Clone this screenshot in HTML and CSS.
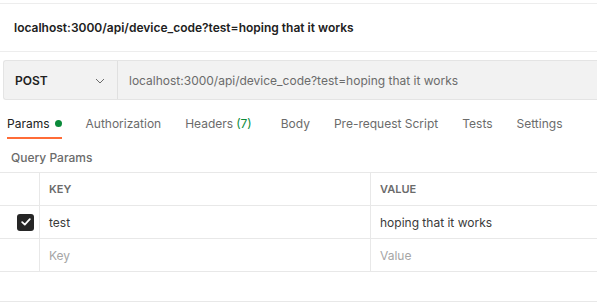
FILE: index.html
```html
<!DOCTYPE html>
<html>
<head>
<meta charset="utf-8">
<link rel="stylesheet" href="styles.css">
</head>
<body>
<div class="page">
  <div class="title">localhost:3000/api/device_code?test=hoping that it works</div>
  <div class="reqbar">
    <div class="method">
      <span>POST</span>
      <svg class="chev" width="10" height="6" viewBox="0 0 10 6"><path d="M1 1 L5 5 L9 1" fill="none" stroke="#6b6b6b" stroke-width="1"/></svg>
    </div>
    <div class="url">localhost:3000/api/device_code?test=hoping that it works</div>
  </div>
  <div class="tabs">
    <div class="tab active">Params <span class="dot"></span></div>
    <div class="tab">Authorization</div>
    <div class="tab headers">Headers <span class="count">(7)</span></div>
    <div class="tab">Body</div>
    <div class="tab">Pre-request Script</div>
    <div class="tab">Tests</div>
    <div class="tab">Settings</div>
  </div>
  <div class="section">Query Params</div>
  <div class="table">
    <div class="row head">
      <div class="cell chk"></div>
      <div class="cell key">KEY</div>
      <div class="cell val">VALUE</div>
    </div>
    <div class="row">
      <div class="cell chk"><span class="box"><svg width="10" height="8" viewBox="0 0 10 8"><path d="M1.2 4.2 L3.8 6.6 L8.8 1.2" fill="none" stroke="#fff" stroke-width="1.8" stroke-linecap="round" stroke-linejoin="round"/></svg></span></div>
      <div class="cell key">test</div>
      <div class="cell val">hoping that it works</div>
    </div>
    <div class="row ph">
      <div class="cell chk"></div>
      <div class="cell key">Key</div>
      <div class="cell val">Value</div>
    </div>
  </div>
  <div class="footer"></div>
</div>
</body>
</html>
```
FILE: styles.css
```css
html, body {
  margin: 0;
  padding: 0;
  background: #fff;
}
body {
  font-family: Inter, "Noto Sans", sans-serif;
  font-size: 12px;
  color: #212121;
  width: 597px;
  overflow: hidden;
}
.page {
  padding-top: 3px;
}
.title {
  border-top: 1px solid #ededed;
  border-bottom: 1px solid #ededed;
  height: 47px;
  display: flex;
  align-items: center;
  padding-left: 14px;
  font-weight: 600;
  font-size: 12px;
  color: #212121;
}
.reqbar {
  margin: 8px 0 0 3px;
  height: 38px;
  display: flex;
  background: #f2f2f2;
  border: 1px solid #e4e4e4;
  border-right: none;
  border-radius: 3px 0 0 3px;
}
.method {
  width: 114px;
  border-right: 1px solid #e0e0e0;
  display: flex;
  align-items: center;
  justify-content: space-between;
  padding: 0 12px 0 11px;
  box-sizing: border-box;
  font-weight: 600;
  color: #212121;
}
.chev {
  margin-top: 1px;
}
.url {
  display: flex;
  align-items: center;
  padding-left: 11px;
  color: #6b6b6b;
}
.tabs {
  display: flex;
  height: 39px;
  padding-left: 7px;
}
.tab {
  display: flex;
  align-items: center;
  color: #6b6b6b;
  font-size: 12px;
  margin-right: 24px;
  box-sizing: border-box;
  padding-top: 10px;
  border-bottom: 2px solid transparent;
}
.tab.active {
  color: #212121;
  border-bottom-color: #ff6c37;
}
.tab.headers {
  margin-right: 29px;
}
.dot {
  display: inline-block;
  width: 7px;
  height: 7px;
  border-radius: 50%;
  background: #0a8a3a;
  margin-left: 5px;
}
.count {
  color: #0a8a3a;
  margin-left: 3px;
}
.section {
  height: 33px;
  display: flex;
  align-items: center;
  padding-left: 11px;
  font-size: 12px;
  font-weight: 500;
  color: #6b6b6b;
  box-sizing: border-box;
  padding-top: 3px;
}
.table {
  border-top: 1px solid #e8e8e8;
}
.row {
  display: flex;
  height: 32px;
  border-bottom: 1px solid #e8e8e8;
}
.cell {
  display: flex;
  align-items: center;
  box-sizing: border-box;
}
.chk {
  width: 40px;
  border-right: 1px solid #e8e8e8;
  justify-content: flex-end;
  padding-right: 5px;
}
.key {
  width: 331px;
  border-right: 1px solid #e8e8e8;
  padding-left: 9px;
}
.val {
  flex: 1;
  padding-left: 9px;
}
.row .key, .row .val {
  color: #3a3a3a;
}
.head .key, .head .val {
  font-weight: 600;
  font-size: 11px;
  color: #6b6b6b;
}
.ph .key, .ph .val {
  color: #a6a6a6;
}
.box {
  width: 17px;
  height: 17px;
  border-radius: 3px;
  background: #262626;
  display: flex;
  align-items: center;
  justify-content: center;
}
.footer {
  height: 29px;
  border-bottom: 1px solid #e8e8e8;
}
```
